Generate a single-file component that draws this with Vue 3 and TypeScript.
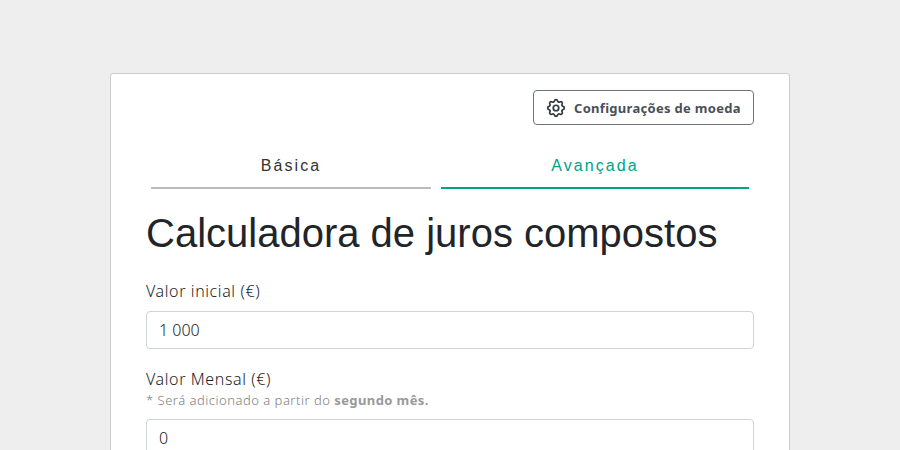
<script setup lang="ts">
const tabs = [
  { label: 'Básica', active: false },
  { label: 'Avançada', active: true },
]
</script>

<template>
  <main class="page">
    <section class="card">
      <div class="toolbar">
        <button class="settings" type="button">
          <svg class="gear" viewBox="0 0 24 24" width="22" height="22" fill="none" stroke="currentColor" stroke-width="1.9" stroke-linecap="round" stroke-linejoin="round">
            <path d="M10.3 4.3c.4-1.8 3-1.8 3.4 0a1.7 1.7 0 0 0 2.6 1.1c1.5-.9 3.3.8 2.4 2.4a1.7 1.7 0 0 0 1 2.5c1.8.4 1.8 3 0 3.4a1.7 1.7 0 0 0-1 2.6c.9 1.5-.9 3.3-2.4 2.4a1.7 1.7 0 0 0-2.6 1c-.4 1.8-3 1.8-3.4 0a1.7 1.7 0 0 0-2.6-1c-1.5.9-3.3-.9-2.4-2.4a1.7 1.7 0 0 0-1-2.6c-1.8-.4-1.8-3 0-3.4a1.7 1.7 0 0 0 1-2.5c-.9-1.6.9-3.3 2.4-2.4 1 .6 2.3.1 2.6-1.1z" />
            <circle cx="12" cy="12" r="3" />
          </svg>
          <span>Configurações de moeda</span>
        </button>
      </div>

      <nav class="tabs">
        <a v-for="tab in tabs" :key="tab.label" class="tab" :class="{ active: tab.active }">{{ tab.label }}</a>
      </nav>

      <h1 class="title">Calculadora de juros compostos</h1>

      <div class="field">
        <label class="label">Valor inicial (€)</label>
        <input class="input" type="text" value="1 000" />
      </div>

      <div class="field">
        <label class="label tight">Valor Mensal (€)</label>
        <small class="hint">* Será adicionado a partir do <b>segundo mês.</b></small>
        <input class="input" type="text" value="0" />
      </div>
    </section>
  </main>
</template>

<style scoped>
.page {
  height: 450px;
  overflow: hidden;
  box-sizing: border-box;
  padding-top: 73px;
  background: #eeeeee;
  font-family: "Noto Sans", sans-serif;
}
.card {
  box-sizing: border-box;
  width: 680px;
  margin: 0 auto;
  padding: 16px 35px 40px;
  background: #fff;
  border: 1px solid #cccccc;
  border-radius: 3px;
}
.toolbar {
  display: flex;
  justify-content: flex-end;
}
.settings {
  display: flex;
  align-items: center;
  gap: 7px;
  box-sizing: border-box;
  height: 35px;
  width: 221px;
  padding: 0 12px 0 11px;
  background: #fff;
  border: 1px solid #6c757d;
  border-radius: 4px;
  color: #495057;
  font-family: inherit;
  font-size: 13px;
  font-weight: 700;
  letter-spacing: 0.3px;
  white-space: nowrap;
}
.gear {
  flex: none;
  color: #343a40;
}
.tabs {
  display: grid;
  grid-template-columns: 280px 308px;
  gap: 10px;
  margin: 14px 5px 0;
}
.tab {
  height: 50px;
  box-sizing: border-box;
  padding-top: 18px;
  border-bottom: 2px solid #bbbbbb;
  text-align: center;
  font-family: "Liberation Sans", Arial, sans-serif;
  font-size: 16px;
  line-height: 18px;
  letter-spacing: 2.1px;
  color: #333333;
}
.tab.active {
  color: #00a287;
  border-bottom-color: #00a287;
}
.title {
  margin: 20px 0 0;
  font-family: "Liberation Sans", Arial, sans-serif;
  font-size: 40px;
  font-weight: 400;
  line-height: 48px;
  color: #212529;
}
.field {
  display: flex;
  flex-direction: column;
  margin-top: 22px;
}
.field + .field {
  margin-top: 18px;
}
.label {
  font-size: 16px;
  font-weight: 300;
  line-height: 24px;
  letter-spacing: 0.6px;
  margin-bottom: 8px;
  color: #212529;
}
.label.tight {
  margin-bottom: 1px;
}
.hint {
  font-size: 13px;
  font-weight: 300;
  line-height: 16px;
  letter-spacing: 0.5px;
  margin-bottom: 11px;
  color: #808080;
}
.hint b {
  font-weight: 700;
  color: #999999;
  letter-spacing: 0.4px;
}
.input {
  box-sizing: border-box;
  width: 100%;
  height: 38px;
  padding: 6px 12px;
  border: 1px solid #ced4da;
  border-radius: 4px;
  font-family: inherit;
  font-size: 16px;
  font-weight: 300;
  color: #212529;
  background: #fff;
  outline: none;
}
</style>
